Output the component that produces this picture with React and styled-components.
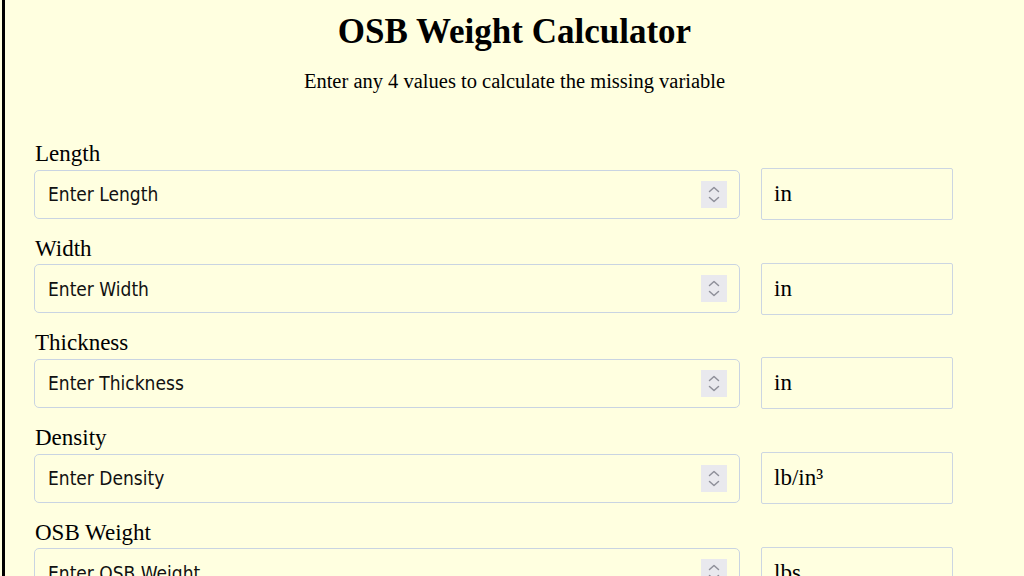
import React from "react"
import styled, { createGlobalStyle } from "styled-components"

const GlobalStyle = createGlobalStyle`
  body {
    margin: 0;
    background: #ffffe0;
    font-family: "Liberation Serif", "Times New Roman", serif;
    color: #000;
  }
`

const Page = styled.div`
  margin-left: 2px;
  border-left: 3px solid #000;
  min-height: 100vh;
  box-sizing: border-box;
  padding: 12px 71px 0 29px;
  overflow: hidden;
`

const Title = styled.h1`
  margin: 0 -71px 0 -29px;
  font-size: 35px;
  line-height: 40px;
  font-weight: bold;
  text-align: center;
`

const Subtitle = styled.p`
  margin: 17px -71px 48px -29px;
  font-size: 20.5px;
  line-height: 24px;
  text-align: center;
`

const Form = styled.div`
  display: grid;
  row-gap: 15.7px;
`

const Field = styled.div`
  display: flex;
  flex-direction: column;
`

const Label = styled.label`
  font-size: 23px;
  line-height: 26px;
  padding-left: 1px;
`

const Row = styled.div`
  display: flex;
  align-items: center;
  gap: 21px;
  height: 52px;
  margin-top: 1px;
`

const InputBox = styled.div`
  flex: 1;
  height: 49px;
  box-sizing: border-box;
  display: flex;
  align-items: center;
  border: 1px solid #c9d4e2;
  border-radius: 5px;
  padding: 0 12px 0 13px;
`

const Input = styled.input`
  flex: 1;
  min-width: 0;
  border: none;
  outline: none;
  background: transparent;
  padding: 0;
  font-family: "DejaVu Sans Condensed", "DejaVu Sans", sans-serif;
  font-stretch: condensed;
  font-size: 19px;
  color: #111;

  &::placeholder {
    color: #111;
    opacity: 1;
  }
`

const Spinner = styled.span`
  display: flex;
  width: 26px;
  height: 27px;
  background: #e9e9ee;
  flex-shrink: 0;
`

const Unit = styled.div`
  width: 192px;
  height: 52px;
  box-sizing: border-box;
  border: 1px solid #ccd6e2;
  border-radius: 2px;
  display: flex;
  align-items: center;
  padding-left: 12px;
  font-size: 23px;
`

const fields = [
  { name: "Length", unit: "in" },
  { name: "Width", unit: "in" },
  { name: "Thickness", unit: "in" },
  { name: "Density", unit: "lb/in³" },
  { name: "OSB Weight", unit: "lbs" },
]

function SpinIcon() {
  return (
    <Spinner>
      <svg width="26" height="27" viewBox="0 0 26 27">
        <path
          d="M8.5 10.5 L13 6.5 L17.5 10.5 M8.5 16.5 L13 20.5 L17.5 16.5"
          fill="none"
          stroke="#8e8f99"
          strokeWidth="1.5"
          strokeLinecap="round"
          strokeLinejoin="round"
        />
      </svg>
    </Spinner>
  )
}

export default function App() {
  return (
    <>
      <GlobalStyle />
      <Page>
        <Title>OSB Weight Calculator</Title>
        <Subtitle>Enter any 4 values to calculate the missing variable</Subtitle>
        <Form>
          {fields.map((f) => (
            <Field key={f.name}>
              <Label>{f.name}</Label>
              <Row>
                <InputBox>
                  <Input placeholder={`Enter ${f.name}`} />
                  <SpinIcon />
                </InputBox>
                <Unit>{f.unit}</Unit>
              </Row>
            </Field>
          ))}
        </Form>
      </Page>
    </>
  )
}
